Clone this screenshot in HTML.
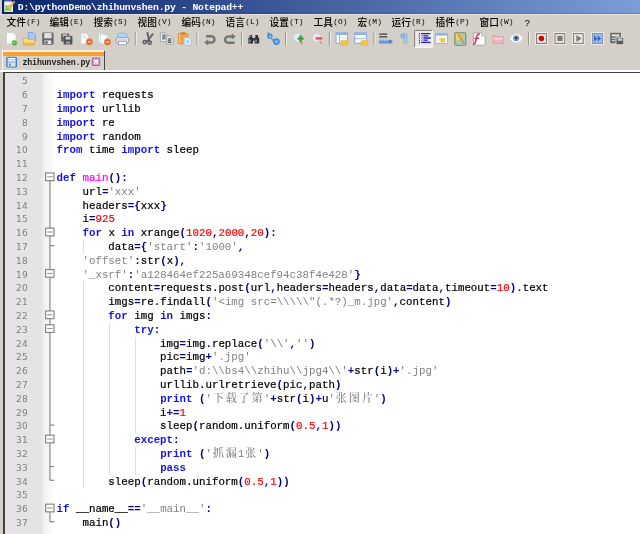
<!DOCTYPE html>
<html><head><meta charset="utf-8"><title>Notepad++</title>
<style>
html,body{margin:0;padding:0;}
body{width:640px;height:534px;overflow:hidden;background:#d4d0c8;position:relative;font-family:"Liberation Sans","Noto Sans CJK SC",sans-serif;}
#title{position:absolute;left:2px;top:0;width:638px;height:13.5px;box-shadow:inset 0 -1.2px 0 rgba(10,30,90,.16);background:linear-gradient(90deg,#0a246a 0,#7c9dd8 638px);}
#tline{position:absolute;left:0;top:13.5px;width:640px;height:1.1px;background:#e6e4dc;}
#title .t{position:absolute;left:15.8px;top:0.8px;line-height:13px;font-family:"Liberation Mono",monospace;font-weight:bold;font-size:9.7px;color:#fff;white-space:pre;letter-spacing:-0.18px;}
#menu{position:absolute;left:0;top:14px;height:15px;width:640px;}
#menu span{position:absolute;top:2.7px;margin-left:0.5px;line-height:13px;font-size:9.7px;color:#000;white-space:pre;font-family:"Liberation Mono","Noto Sans CJK SC",sans-serif;font-weight:500;}
#menu span i{font-style:normal;font-family:"Liberation Mono",monospace;font-size:7.9px;letter-spacing:0.1px;font-weight:normal;position:relative;top:-1.6px;left:0.3px;}
#ed{position:absolute;left:3px;top:70px;width:637px;height:464px;background:#fff;}
#edtop{position:absolute;left:0;top:70.2px;width:640px;height:1.4px;background:#fff;}
#edtop2{position:absolute;left:3.3px;top:71.6px;width:637px;height:1.6px;background:#404040;}
#edleft{position:absolute;left:3.3px;top:71.6px;width:1.7px;height:463px;background:#404040;}
#lnm{position:absolute;left:5px;top:73.2px;width:37.2px;height:461px;background:#e4e4e4;}
#fm{position:absolute;left:42.2px;top:73.2px;width:13px;height:461px;background:linear-gradient(90deg,#e8e8e8,#f3f3f3 25%,#f8f8f8 60%,#fff);}
.ln{position:absolute;left:5px;width:22.9px;margin-top:0px;text-align:right;font-family:"DejaVu Sans",sans-serif;font-size:9px;color:#808080;height:14px;line-height:14px;letter-spacing:0.2px;}
.cl{position:absolute;left:56.6px;height:14px;line-height:14px;font-family:"Liberation Mono","Noto Sans CJK SC",monospace;font-size:10.79px;color:#000;white-space:pre;letter-spacing:0px;-webkit-text-stroke:0.22px currentColor;}
.cl,.ln,#menu span,#title .t,#tabt{filter:blur(0.3px);}
.cl b{-webkit-text-stroke:0;}
.cl b.k{color:#1212ea;font-weight:bold;}
.cl b.o{color:#000080;font-weight:bold;}
.cl .s{color:#808080;-webkit-text-stroke:0;}
.cl .n{color:#ff0000;}
.cl .f{color:#ff00ff;}
.cl .c{font-family:"Liberation Mono","Noto Serif CJK SC",serif;font-size:11.2px;letter-spacing:1.748px;line-height:0;position:relative;left:0.8px;font-weight:500;}
.fb{position:absolute;left:45.1px;width:7.3px;height:6.7px;border:1.1px solid #808080;background:#fff;}
.fb:after{content:"";position:absolute;left:1.2px;right:1.2px;top:2.9px;height:1px;background:#808080;}
.fv{position:absolute;left:49.4px;width:1.1px;background:#808080;}
.fh{position:absolute;left:49.4px;width:5px;height:1.1px;background:#808080;}
.ig{position:absolute;width:1px;background:#e0e0e0;}
</style></head><body>

<svg width="16" height="14" viewBox="0 0 16 14" style="position:absolute;left:3px;top:0;z-index:2"><defs><linearGradient id="gi" x1="0" y1="1" x2="1" y2="0"><stop offset="0" stop-color="#5fb83a"/><stop offset="0.6" stop-color="#b9d83c"/><stop offset="1" stop-color="#f2dc4a"/></linearGradient></defs><path d="M1.200 1.900h8.800v10H1.200z" fill="#f6f6fa"/><path d="M1.200 0.600h7.600v1.600H1.200z" fill="#b9a8d8"/><path d="M2.300 5h6.300v5.600H2.300z" fill="url(#gi)"/><path d="M11 0.800l1.200 1-3.600 4.600-1.400.6.200-1.500z" fill="#f2b83c" stroke="#c8783a" stroke-width="0.400"/></svg>
<div id="title"><span class="t">D:\pythonDemo\zhihunvshen.py - Notepad++</span></div>
<div id="tline"></div><div id="menu">
<span style="left:6px">文件<i>(F)</i></span>
<span style="left:49px">编辑<i>(E)</i></span>
<span style="left:93px">搜索<i>(S)</i></span>
<span style="left:137px">视图<i>(V)</i></span>
<span style="left:181px">编码<i>(N)</i></span>
<span style="left:225px">语言<i>(L)</i></span>
<span style="left:269px">设置<i>(T)</i></span>
<span style="left:313px">工具<i>(O)</i></span>
<span style="left:357px">宏<i>(M)</i></span>
<span style="left:391px">运行<i>(R)</i></span>
<span style="left:435px">插件<i>(P)</i></span>
<span style="left:479px">窗口<i>(W)</i></span>
<span style="left:524px">?</span>
</div>
<svg id="tb" width="640" height="22" viewBox="0 29 640 22" style="position:absolute;left:0;top:29px;filter:blur(0.3px)">
<defs>
<linearGradient id="gfold" x1="0" y1="0" x2="0" y2="1"><stop offset="0" stop-color="#fbe58a"/><stop offset="1" stop-color="#e9b93a"/></linearGradient>
<linearGradient id="gblue" x1="0" y1="0" x2="0" y2="1"><stop offset="0" stop-color="#9cc0ee"/><stop offset="1" stop-color="#4c83cf"/></linearGradient>
</defs>
<!-- separators -->
<g stroke="#98968f" stroke-width="1.1">
<path d="M135.3 32v13.5M197 32v13.5M241.6 32v13.5M285.6 32v13.5M329.4 32v13.5M374 32v13.5M528.6 32v13.5"/>
</g>
<g stroke="#f4f2ee" stroke-width="0.9">
<path d="M136.3 32v13.5M198 32v13.5M242.6 32v13.5M286.6 32v13.5M330.4 32v13.5M375 32v13.5M529.6 32v13.5"/>
</g>
<!-- 1 new -->
<path d="M6.5 32.5h6.5l3 3v8.5h-9.5z" fill="#fbfbfd" stroke="#c8cad6" stroke-width="0.7"/>
<circle cx="14.500" cy="42.900" r="2.900" fill="#4f9a2c" stroke="#dfe9d6" stroke-width="0.700"/>
<circle cx="14.300" cy="42.600" r="1.200" fill="#a6d884"/>
<!-- 2 open -->
<path d="M28.3 32.5h4.6l2.6 2.6v5.4h-7.2z" fill="#a9c7f2" stroke="#6f9be0" stroke-width="0.8"/>
<path d="M23.2 38.2h4l1 1.2h6v5.6h-11z" fill="url(#gfold)" stroke="#d9a834" stroke-width="0.7"/>
<path d="M23.6 41.2h10.2" stroke="#fdf3c0" stroke-width="0.8"/>
<!-- 3 save -->
<rect x="42.2" y="32.6" width="11.4" height="12.2" rx="0.8" fill="#6c6c70"/>
<rect x="44.3" y="33.2" width="7.2" height="5" fill="#f2f2f6"/>
<rect x="44.6" y="40.4" width="6.6" height="3.6" fill="#dfe3ee"/>
<rect x="45.4" y="41.2" width="2.2" height="2.4" fill="#55555c"/>
<path d="M44.3 35h7.2M44.3 36.8h7.2" stroke="#b8b8c4" stroke-width="0.6"/>
<!-- 4 save all -->
<rect x="61.2" y="33.6" width="8" height="8" fill="#5a5a5e"/>
<rect x="62.7" y="34.2" width="4.6" height="2.6" fill="#c8c8cc"/>
<rect x="63.8" y="36" width="8.4" height="8.4" fill="#4e4e52" stroke="#8a8a8e" stroke-width="0.5"/>
<rect x="65.6" y="36.8" width="4.8" height="2.8" fill="#d0d0d4"/>
<rect x="66" y="41.4" width="4" height="2.4" fill="#9a9aa0"/>
<!-- 5 close -->
<path d="M80.8 33.2h5.2l2.6 2.6v8.2h-7.8z" fill="#fafbfd" stroke="#c4cad8" stroke-width="0.7"/>
<path d="M82.2 35.6h3.2M82.2 37.4h4.8" stroke="#b9d0ee" stroke-width="0.7"/>
<circle cx="89.3" cy="41.9" r="3.3" fill="#e2661c" stroke="#f0a470" stroke-width="0.6"/>
<rect x="87.7" y="41.1" width="3.2" height="1.5" fill="#f8c9a6"/>
<!-- 6 close all -->
<path d="M98.4 33.2h5.4v9.6h-5.4z" fill="#f3f7f6" stroke="#bcd2cc" stroke-width="0.7"/>
<path d="M100.6 34.6h5.4l1.4 1.4v8h-6.8z" fill="#fafbfd" stroke="#c4cad8" stroke-width="0.7"/>
<circle cx="107.4" cy="42" r="3.3" fill="#e2661c" stroke="#f0a470" stroke-width="0.6"/>
<rect x="105.8" y="41.2" width="3.2" height="1.5" fill="#f8c9a6"/>
<!-- 7 print -->
<path d="M118.8 33h7.2l1 1.2v4h-9.2v-4z" fill="#b7d3f4" stroke="#7fa7e2" stroke-width="0.7"/>
<rect x="116.2" y="37.6" width="12.4" height="5.4" rx="1.2" fill="#e9ebf0" stroke="#8b909c" stroke-width="0.8"/>
<rect x="118.4" y="41.6" width="8" height="3.2" fill="#fdfdfd" stroke="#8b909c" stroke-width="0.7"/>
<path d="M117.4 40h10" stroke="#a9aebb" stroke-width="0.7"/>
<!-- 8 cut -->
<g fill="none" stroke="#5e6168" stroke-linecap="round">
<path d="M147.400 32.800l1.800 7.600" stroke-width="1.900"/>
<path d="M152.600 34.300l-4.800 6.500" stroke-width="1.900"/>
<path d="M146 41l2.600-0.800" stroke-width="1.600"/>
<circle cx="144.700" cy="42.100" r="1.600" stroke-width="1.600"/>
<circle cx="149.700" cy="42.700" r="1.600" stroke-width="1.600"/>
</g>
<!-- 9 copy -->
<path d="M160.400 32.800h4.800l2 2v6.800h-6.800z" fill="#eceef2" stroke="#8a8e98" stroke-width="0.700"/>
<rect x="162.300" y="34.400" width="3.200" height="5" fill="#6a6d74"/>
<path d="M162.300 36h3.200M162.300 37.800h3.200" stroke="#c8cad0" stroke-width="0.500"/>
<path d="M166.400 36h4.600l2 2v6.200h-6.600z" fill="#eceef2" stroke="#8a8e98" stroke-width="0.700"/>
<rect x="167.800" y="38.200" width="3.400" height="4.800" fill="#5c5f66"/>
<path d="M167.800 39.800h3.400M167.800 41.400h3.400" stroke="#c8cad0" stroke-width="0.500"/>
<!-- 10 paste -->
<rect x="178.4" y="33.2" width="9.6" height="10.6" rx="1.2" fill="#f0a43c" stroke="#d98b28" stroke-width="0.7"/>
<rect x="181" y="32.2" width="4.4" height="2.2" rx="0.8" fill="#c9842c"/>
<path d="M179.6 35v7.6" stroke="#fbd08c" stroke-width="1"/>
<path d="M184 37.4h5l2.6 2.4v5.6h-7.6z" fill="#d9e8fb" stroke="#9bbcee" stroke-width="0.8"/>
<circle cx="187.8" cy="41.4" r="1.5" fill="#a9c8f4"/>
<!-- 11 undo -->
<path d="M206 36.300h5.400a3.100 3.100 0 0 1 0 6.200h-3.800" fill="none" stroke="#74767a" stroke-width="2.500"/>
<path d="M204.200 42.400l4-3.200v6.400z" fill="#74767a"/>
<!-- 12 redo -->
<path d="M234.600 42.800h-6.400a3.100 3.100 0 0 1 0-6.200h3.800" fill="none" stroke="#74767a" stroke-width="2.500"/>
<path d="M235.800 36.400l-4-3.200v6.400z" fill="#74767a"/>
<!-- 13 find -->
<g fill="#2c3036">
<rect x="248.400" y="37.400" width="4.600" height="6.200" rx="0.600"/>
<rect x="254.600" y="37.400" width="4.600" height="6.200" rx="0.600"/>
<rect x="249.600" y="35" width="2.600" height="3"/>
<rect x="255.400" y="35" width="2.600" height="3"/>
<rect x="252.400" y="38.200" width="2.800" height="2.400"/>
</g>
<rect x="249.200" y="39.600" width="1.400" height="2.600" fill="#8aa0c0"/>
<rect x="255.400" y="39.600" width="1.400" height="2.600" fill="#8aa0c0"/>
<rect x="250.200" y="35.400" width="1" height="1.600" fill="#6f8fc8"/>
<!-- 14 replace -->
<g fill="#3d8ad8">
<circle cx="270" cy="36.200" r="2.600"/>
<rect x="267.600" y="32.400" width="1.600" height="5"/>
<circle cx="276.400" cy="41.600" r="3.400"/>
<path d="M271 38.400l3.400 1.200-1.600 1.600z"/>
</g>
<circle cx="270.200" cy="36.400" r="1" fill="#cfe3f8"/>
<path d="M274.800 40.200l3.200 2.800M278 40.200l-3.200 2.800" stroke="#bcd8f6" stroke-width="0.900"/>
<!-- 15 zoom in -->
<circle cx="297.600" cy="37.600" r="4.300" fill="#e4ecf8" stroke="#c2d0e8" stroke-width="0.800"/>
<path d="M300.600 35.200v6.800M297.600 38.600h6" stroke="#3f9a3c" stroke-width="2.200"/>
<path d="M300.800 42l1.600 2" stroke="#b78a5a" stroke-width="1.400"/>
<!-- 16 zoom out -->
<circle cx="316.600" cy="37.600" r="4.300" fill="#e9e6f0" stroke="#d2c8dc" stroke-width="0.800"/>
<path d="M315.800 38.400h6.400" stroke="#e0504c" stroke-width="2.400"/>
<path d="M319.800 41l1.600 2.600" stroke="#d8847c" stroke-width="1.400"/>
<!-- 17 sync v -->
<rect x="336" y="32.800" width="11.600" height="10.400" fill="#fafcff" stroke="#7fa4dc" stroke-width="0.900"/>
<rect x="336" y="32.800" width="11.600" height="2.200" fill="#8fb4ea"/>
<path d="M339.600 35v8" stroke="#7fa4dc" stroke-width="0.800"/>
<path d="M342.700 40.600v-1.200a1.700 1.700 0 0 1 3.400 0v1.200" fill="none" stroke="#eadfb8" stroke-width="1"/>
<rect x="341" y="40.500" width="6.800" height="4.900" rx="0.600" fill="#f4c63c" stroke="#e2b030" stroke-width="0.500"/>
<!-- 18 sync h -->
<rect x="354.800" y="32.800" width="11.600" height="10.400" fill="#fafcff" stroke="#7fa4dc" stroke-width="0.900"/>
<rect x="354.800" y="32.800" width="11.600" height="2.200" fill="#8fb4ea"/>
<path d="M354.800 38.600h11.600" stroke="#7fa4dc" stroke-width="0.800"/>
<path d="M362.700 40.600v-1.200a1.700 1.700 0 0 1 3.400 0v1.200" fill="none" stroke="#eadfb8" stroke-width="1"/>
<rect x="361" y="40.500" width="6.800" height="4.900" rx="0.600" fill="#f4c63c" stroke="#e2b030" stroke-width="0.500"/>
<!-- 19 wrap -->
<path d="M379.200 34.200h8M379.200 36.800h8" stroke="#3a3e44" stroke-width="1.200"/>
<path d="M379 39.400h11.400c1.600 0 2.200.8 2.200 2s-.6 2.200-2.200 2.200H379z" fill="url(#gblue)"/>
<path d="M388.600 40.400h3.200l-1.600 2.400z" fill="#2d5aa8"/>
<!-- 20 pilcrow -->
<path d="M403.600 33.200h3.600v10.600h-1.300v-9.400h-1.200v9.400h-1.300v-5.600a2.600 2.600 0 0 1 .2-5z" fill="#8fb2dc"/>
<circle cx="402.800" cy="35.800" r="2.600" fill="#8fb2dc"/>
<!-- 21 indent guide (pressed) -->
<rect x="414.600" y="30.400" width="17.800" height="17" fill="#eceae6"/>
<path d="M414.600 47.400v-17h17.800" fill="none" stroke="#807e78" stroke-width="1"/>
<path d="M432.400 30.400v17h-17.800" fill="none" stroke="#fbfaf8" stroke-width="1"/>
<g stroke="#1c1cd6" stroke-width="1.300">
<path d="M421 33.600h9.400M423.400 35.800h5M423.400 38h7.400M423.400 40.200h4.400M421 42.400h9.600"/>
</g>
<path d="M419.400 33v11.400" stroke="#1c1cd6" stroke-width="1" stroke-dasharray="1.400 0.900"/>
<path d="M422 35v6" stroke="#1c1cd6" stroke-width="0.900" stroke-dasharray="1.200 1"/>
<!-- 22 user lang -->
<rect x="435.400" y="33.400" width="12.200" height="10" rx="0.800" fill="#f3f7fc" stroke="#8fb0e0" stroke-width="0.900"/>
<rect x="435.400" y="33.400" width="12.200" height="2.200" fill="#8fb4ea"/>
<path d="M439 39.600l2.400-2.200 1.600 1 2.600-.6-.8 2.400 1 1.600-2.600.2-1.800 1.400-.6-2.200z" fill="#f2c73a"/>
<!-- 23 doc map -->
<rect x="454.800" y="32.800" width="11" height="12.400" rx="1.200" fill="#a9cfa4" stroke="#80866c" stroke-width="1.100"/>
<path d="M456 33.800h4.400v5l-4.400 2z" fill="#f0d45c"/>
<path d="M462 39h3v5.400h-5.400z" fill="#9fc4e4"/>
<path d="M458.200 34.200l5.800 9.600" stroke="#e8903c" stroke-width="1.800"/>
<!-- 24 function list -->
<path d="M473.400 32.800h8.400l3.400 3.200v8.200a1 1 0 0 1-1 1h-10.800z" fill="#fbfbfb" stroke="#a4a4a8" stroke-width="0.900"/>
<path d="M481.800 32.800v3.200h3.400" fill="#e4e4e8" stroke="#a4a4a8" stroke-width="0.700"/>
<path d="M479.800 33.800c-1.600-.2-2.400.6-2.800 2.200l-1.800 6.400c-.4 1.200-1 1.800-2.200 1.600" fill="none" stroke="#d23a5a" stroke-width="1.700"/>
<path d="M474.400 38.400h4.800" stroke="#d23a5a" stroke-width="1.300"/>
<!-- 25 folder pink -->
<path d="M492.800 35.600h4l.8 1h6v7h-10.800z" fill="#f2b4bc" stroke="#dc98a4" stroke-width="0.700"/>
<path d="M493.400 38.800h9.600" stroke="#fbe4e8" stroke-width="1.100"/>
<!-- 26 eye -->
<path d="M510 38.400c2-3.600 5-4.800 7.600-4.400 2.200.4 3.800 2 5 4.200-1.400 2.800-3.600 4.600-6.400 4.600-2.600 0-4.800-1.600-6.200-4.400z" fill="#fdfdfd" stroke="#e8dcd0" stroke-width="0.800"/>
<circle cx="516.200" cy="38.200" r="3" fill="#6a94c4"/>
<circle cx="516.200" cy="38" r="1.200" fill="#1c2c48"/>
<!-- 27 record -->
<g fill="none" stroke="#f4f2ee" stroke-width="1">
<rect x="535.700" y="32.700" width="11.600" height="11.600"/><rect x="554.100" y="32.700" width="11.600" height="11.600"/><rect x="572.500" y="32.700" width="11.600" height="11.600"/><rect x="591.500" y="32.700" width="12" height="11.600"/>
</g>
<rect x="536.600" y="33.600" width="9.800" height="9.800" fill="#e9e7e3" stroke="#7c7a76" stroke-width="1"/>
<circle cx="541.400" cy="38.400" r="2.700" fill="#d40000"/>
<!-- 28 stop -->
<rect x="555" y="33.600" width="9.800" height="9.800" fill="#e9e7e3" stroke="#7c7a76" stroke-width="1"/>
<rect x="557.400" y="35.800" width="5.200" height="5.200" fill="#7a7a7a"/>
<!-- 29 play -->
<rect x="573.400" y="33.600" width="9.800" height="9.800" fill="#e9e7e3" stroke="#7c7a76" stroke-width="1"/>
<path d="M576.400 35l5.200 3.500-5.200 3.500z" fill="#7a7a7a"/>
<!-- 30 play multi -->
<rect x="592.400" y="33.600" width="10.200" height="9.800" fill="#9dbdf0" stroke="#8490a8" stroke-width="1"/>
<path d="M594 35.200l3.400 3.300-3.400 3.300zM597.600 35.200l3.600 3.300-3.600 3.300z" fill="#3565d2"/>
<!-- 31 save macro -->
<rect x="610.200" y="32.800" width="10.800" height="10.400" fill="#6a6a6c"/>
<rect x="611.800" y="34.400" width="7.600" height="2" fill="#e4e4e4"/>
<path d="M611.800 38.400h3.400M611.800 40.600h3.400" stroke="#d8d8d8" stroke-width="1"/>
<rect x="616" y="37.200" width="7.800" height="7.600" fill="#5c5c5e" stroke="#ececec" stroke-width="0.800"/>
<rect x="617.600" y="38.400" width="4.600" height="2.400" fill="#d0d0d4"/>
</svg>

<div id="tab" style="position:absolute;left:3px;top:51px;width:101px;height:19.300px;background:#d7d3cb;"></div>
<div style="position:absolute;left:1.800px;top:51px;width:1.400px;height:19.300px;background:#f7f5f1;"></div>
<div style="position:absolute;left:2px;top:50.200px;width:102px;height:1.500px;background:#f3efe8;"></div>
<div style="position:absolute;left:3.300px;top:51.700px;width:100.500px;height:3.900px;background:#f5a02f;"></div>
<div style="position:absolute;left:103.800px;top:51px;width:1.400px;height:19px;background:#48464a;"></div>
<svg width="14" height="13" viewBox="5 56 14 13" style="position:absolute;left:5px;top:56px">
<rect x="6.800" y="57.300" width="9.700" height="9.700" rx="1" fill="#8db6e8" stroke="#4a7cc0" stroke-width="1.100"/>
<rect x="8.200" y="58" width="6.900" height="3.400" fill="#f6f9fe"/>
<path d="M8.200 59.700h6.900" stroke="#7fa8e0" stroke-width="0.700"/>
<rect x="8" y="62.700" width="7.300" height="3.700" fill="#d4e8e0"/>
<rect x="9" y="63.500" width="1.800" height="2.300" fill="#5a8ad0"/>
</svg>
<div id="tabt" style="position:absolute;left:22.400px;top:55.900px;height:13px;line-height:13px;font-family:'Liberation Mono',monospace;font-weight:bold;font-size:8.300px;letter-spacing:-0.140px;color:#1c1c1c;white-space:pre;">zhihunvshen.py</div>
<svg width="10" height="10" viewBox="91 57 10 10" style="position:absolute;left:91px;top:57px">
<rect x="92.300" y="58.100" width="7.400" height="7.400" rx="0.600" fill="#d99ac4" stroke="#a85c9a" stroke-width="1"/>
<path d="M94 59.800l4 4M98 59.800l-4 4" stroke="#ffffff" stroke-width="1.500"/>
</svg>

<div id="edtop"></div><div id="ed"></div><div id="edtop2"></div><div id="edleft"></div><div id="lnm"></div><div id="fm"></div>
<div class="ln" style="top:74.30px">5</div>
<div class="ln" style="top:88.10px">6</div>
<div class="cl" style="top:88.10px"><b class="k">import</b> requests</div>
<div class="ln" style="top:101.90px">7</div>
<div class="cl" style="top:101.90px"><b class="k">import</b> urllib</div>
<div class="ln" style="top:115.70px">8</div>
<div class="cl" style="top:115.70px"><b class="k">import</b> re</div>
<div class="ln" style="top:129.50px">9</div>
<div class="cl" style="top:129.50px"><b class="k">import</b> random</div>
<div class="ln" style="top:143.30px">10</div>
<div class="cl" style="top:143.30px"><b class="k">from</b> time <b class="k">import</b> sleep</div>
<div class="ln" style="top:157.10px">11</div>
<div class="ln" style="top:170.90px">12</div>
<div class="cl" style="top:170.90px"><b class="k">def</b> <span class="f">main</span><b class="o">():</b></div>
<div class="ln" style="top:184.70px">13</div>
<div class="cl" style="top:184.70px">    url<b class="o">=</b><span class="s">&#x27;xxx&#x27;</span></div>
<div class="ln" style="top:198.50px">14</div>
<div class="cl" style="top:198.50px">    headers<b class="o">={</b>xxx<b class="o">}</b></div>
<div class="ln" style="top:212.30px">15</div>
<div class="cl" style="top:212.30px">    i<b class="o">=</b><span class="n">925</span></div>
<div class="ln" style="top:226.10px">16</div>
<div class="cl" style="top:226.10px">    <b class="k">for</b> x <b class="k">in</b> xrange<b class="o">(</b><span class="n">1020</span><b class="o">,</b><span class="n">2000</span><b class="o">,</b><span class="n">20</span><b class="o">):</b></div>
<div class="ln" style="top:239.90px">17</div>
<div class="cl" style="top:239.90px">        data<b class="o">={</b><span class="s">&#x27;start&#x27;</span><b class="o">:</b><span class="s">&#x27;1000&#x27;</span><b class="o">,</b></div>
<div class="ln" style="top:253.70px">18</div>
<div class="cl" style="top:253.70px">    <span class="s">&#x27;offset&#x27;</span><b class="o">:</b>str<b class="o">(</b>x<b class="o">),</b></div>
<div class="ln" style="top:267.50px">19</div>
<div class="cl" style="top:267.50px">    <span class="s">&#x27;_xsrf&#x27;</span><b class="o">:</b><span class="s">&#x27;a128464ef225a69348cef94c38f4e428&#x27;</span><b class="o">}</b></div>
<div class="ln" style="top:281.30px">20</div>
<div class="cl" style="top:281.30px">        content<b class="o">=</b>requests<b class="o">.</b>post<b class="o">(</b>url<b class="o">,</b>headers<b class="o">=</b>headers<b class="o">,</b>data<b class="o">=</b>data<b class="o">,</b>timeout<b class="o">=</b><span class="n">10</span><b class="o">).</b>text</div>
<div class="ln" style="top:295.10px">21</div>
<div class="cl" style="top:295.10px">        imgs<b class="o">=</b>re<b class="o">.</b>findall<b class="o">(</b><span class="s">&#x27;&lt;img src=\\\\\&quot;(.*?)_m.jpg&#x27;</span><b class="o">,</b>content<b class="o">)</b></div>
<div class="ln" style="top:308.90px">22</div>
<div class="cl" style="top:308.90px">        <b class="k">for</b> img <b class="k">in</b> imgs<b class="o">:</b></div>
<div class="ln" style="top:322.70px">23</div>
<div class="cl" style="top:322.70px">            <b class="k">try</b><b class="o">:</b></div>
<div class="ln" style="top:336.50px">24</div>
<div class="cl" style="top:336.50px">                img<b class="o">=</b>img<b class="o">.</b>replace<b class="o">(</b><span class="s">&#x27;\\&#x27;</span><b class="o">,</b><span class="s">&#x27;&#x27;</span><b class="o">)</b></div>
<div class="ln" style="top:350.30px">25</div>
<div class="cl" style="top:350.30px">                pic<b class="o">=</b>img<b class="o">+</b><span class="s">&#x27;.jpg&#x27;</span></div>
<div class="ln" style="top:364.10px">26</div>
<div class="cl" style="top:364.10px">                path<b class="o">=</b><span class="s">&#x27;d:\\bs4\\zhihu\\jpg4\\&#x27;</span><b class="o">+</b>str<b class="o">(</b>i<b class="o">)+</b><span class="s">&#x27;.jpg&#x27;</span></div>
<div class="ln" style="top:377.90px">27</div>
<div class="cl" style="top:377.90px">                urllib<b class="o">.</b>urlretrieve<b class="o">(</b>pic<b class="o">,</b>path<b class="o">)</b></div>
<div class="ln" style="top:391.70px">28</div>
<div class="cl" style="top:391.70px">                <b class="k">print</b> <b class="o">(</b><span class="s">&#x27;</span><span class="s c">下载了第</span><span class="s">&#x27;</span><b class="o">+</b>str<b class="o">(</b>i<b class="o">)+</b>u<span class="s">&#x27;</span><span class="s c">张图片</span><span class="s">&#x27;</span><b class="o">)</b></div>
<div class="ln" style="top:405.50px">29</div>
<div class="cl" style="top:405.50px">                i<b class="o">+=</b><span class="n">1</span></div>
<div class="ln" style="top:419.30px">30</div>
<div class="cl" style="top:419.30px">                sleep<b class="o">(</b>random<b class="o">.</b>uniform<b class="o">(</b><span class="n">0.5</span><b class="o">,</b><span class="n">1</span><b class="o">))</b></div>
<div class="ln" style="top:433.10px">31</div>
<div class="cl" style="top:433.10px">            <b class="k">except</b><b class="o">:</b></div>
<div class="ln" style="top:446.90px">32</div>
<div class="cl" style="top:446.90px">                <b class="k">print</b> <b class="o">(</b><span class="s">&#x27;</span><span class="s c">抓漏</span><span class="s">1</span><span class="s c">张</span><span class="s">&#x27;</span><b class="o">)</b></div>
<div class="ln" style="top:460.70px">33</div>
<div class="cl" style="top:460.70px">                <b class="k">pass</b></div>
<div class="ln" style="top:474.50px">34</div>
<div class="cl" style="top:474.50px">        sleep<b class="o">(</b>random<b class="o">.</b>uniform<b class="o">(</b><span class="n">0.5</span><b class="o">,</b><span class="n">1</span><b class="o">))</b></div>
<div class="ln" style="top:488.30px">35</div>
<div class="ln" style="top:502.10px">36</div>
<div class="cl" style="top:502.10px"><b class="k">if</b> __name__<b class="o">==</b><span class="s">&#x27;__main__&#x27;</span><b class="o">:</b></div>
<div class="ln" style="top:515.90px">37</div>
<div class="cl" style="top:515.90px">    main<b class="o">()</b></div>
<svg width="14" height="462" viewBox="43 72 14 462" style="position:absolute;left:43px;top:72px"><g stroke="#848484" stroke-width="1.15" fill="none"><path d="M49.9 180.90V480.30"/><path d="M49.9 512.10V521.70"/><path d="M49.9 245.70H54.4"/><path d="M49.9 425.10H54.4"/><path d="M49.9 466.50H54.4"/><path d="M49.9 480.30H54.4"/><path d="M49.9 521.70H54.4"/></g><rect x="45.6" y="172.95" width="8.4" height="7.7" fill="#fff" stroke="#848484" stroke-width="1.15"/><path d="M47.2 176.80H52.6" stroke="#8c8c8c" stroke-width="1"/><rect x="45.6" y="228.15" width="8.4" height="7.7" fill="#fff" stroke="#848484" stroke-width="1.15"/><path d="M47.2 232.00H52.6" stroke="#8c8c8c" stroke-width="1"/><rect x="45.6" y="269.55" width="8.4" height="7.7" fill="#fff" stroke="#848484" stroke-width="1.15"/><path d="M47.2 273.40H52.6" stroke="#8c8c8c" stroke-width="1"/><rect x="45.6" y="310.95" width="8.4" height="7.7" fill="#fff" stroke="#848484" stroke-width="1.15"/><path d="M47.2 314.80H52.6" stroke="#8c8c8c" stroke-width="1"/><rect x="45.6" y="324.75" width="8.4" height="7.7" fill="#fff" stroke="#848484" stroke-width="1.15"/><path d="M47.2 328.60H52.6" stroke="#8c8c8c" stroke-width="1"/><rect x="45.6" y="435.15" width="8.4" height="7.7" fill="#fff" stroke="#848484" stroke-width="1.15"/><path d="M47.2 439.00H52.6" stroke="#8c8c8c" stroke-width="1"/><rect x="45.6" y="504.15" width="8.4" height="7.7" fill="#fff" stroke="#848484" stroke-width="1.15"/><path d="M47.2 508.00H52.6" stroke="#8c8c8c" stroke-width="1"/></svg>
<div class="ig" style="left:82.80px;top:240.00px;height:13.80px"></div>
<div class="ig" style="left:82.80px;top:281.40px;height:207.00px"></div>
<div class="ig" style="left:108.69px;top:322.80px;height:151.80px"></div>
<div class="ig" style="left:134.59px;top:336.60px;height:96.60px"></div>
<div class="ig" style="left:134.59px;top:447.00px;height:27.60px"></div>
</body></html>
